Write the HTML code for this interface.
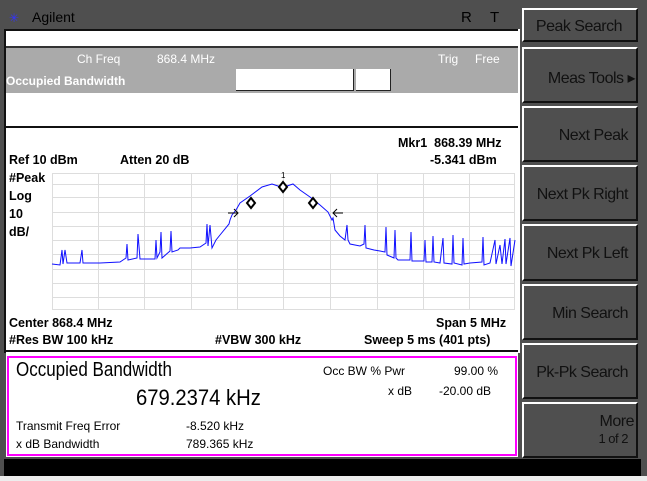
<!DOCTYPE html><html><head><style>
body{margin:0;width:647px;height:481px;background:#ededed;position:relative;overflow:hidden;font-family:"Liberation Sans",sans-serif}
.a{position:absolute}
.k{position:absolute;left:522px;width:116px;background:#4f4f4f;border-top:2px solid #fff;border-left:2px solid #fff;border-right:2px solid #111;border-bottom:2px solid #111;color:#111;font-size:16px;letter-spacing:-0.5px;text-align:right;box-sizing:border-box;padding-right:8px}
.b{font-weight:bold;font-size:12.5px;color:#000;position:absolute;white-space:nowrap}
.g{color:#fff;font-size:12px;position:absolute}
.m{position:absolute;font-size:12px;color:#000;white-space:nowrap}
</style></head><body>
<div class="a" style="left:0;top:0;width:647px;height:476px;background:#4f4f4f"></div>
<div class="a" style="left:9px;top:11px;color:#33f;font-size:12px">✳</div>
<div class="a" style="left:32px;top:9px;font-size:14px;color:#000">Agilent</div>
<div class="a" style="left:461px;top:9px;font-size:15px;color:#000">R</div>
<div class="a" style="left:490px;top:9px;font-size:15px;color:#000">T</div>
<div class="a" style="left:4px;top:29px;width:514px;height:324px;background:#fff;border-left:2px solid #111"></div>
<div class="a" style="left:6px;top:29px;width:512px;height:2px;background:#111"></div>
<div class="a" style="left:6px;top:47px;width:512px;height:46px;background:#aaa"></div>
<div class="a" style="left:6px;top:46px;width:512px;height:2px;background:#333"></div>
<div class="g" style="left:77px;top:52px">Ch Freq</div>
<div class="g" style="left:157px;top:52px">868.4 MHz</div>
<div class="g" style="left:438px;top:52px">Trig</div>
<div class="g" style="left:475px;top:52px">Free</div>
<div class="g" style="left:6px;top:74px;font-weight:bold">Occupied Bandwidth</div>
<div class="a" style="left:236px;top:69px;width:117px;height:21px;background:#fff;border-right:1px solid #222;border-bottom:1px solid #222"></div>
<div class="a" style="left:356px;top:69px;width:34px;height:21px;background:#fff;border-right:1px solid #222;border-bottom:1px solid #222"></div>
<div class="a" style="left:6px;top:126px;width:512px;height:2px;background:#111"></div>
<div class="b" style="left:398px;top:136px">Mkr1&nbsp; 868.39 MHz</div>
<div class="b" style="left:9px;top:153px">Ref 10 dBm</div>
<div class="b" style="left:120px;top:153px">Atten 20 dB</div>
<div class="b" style="left:430px;top:153px">-5.341 dBm</div>
<div class="b" style="left:9px;top:171px">#Peak</div>
<div class="b" style="left:9px;top:189px">Log</div>
<div class="b" style="left:9px;top:207px">10</div>
<div class="b" style="left:9px;top:225px">dB/</div>
<div class="b" style="left:9px;top:316px">Center 868.4 MHz</div>
<div class="b" style="left:436px;top:316px">Span 5 MHz</div>
<div class="b" style="left:9px;top:333px">#Res BW 100 kHz</div>
<div class="b" style="left:215px;top:333px">#VBW 300 kHz</div>
<div class="b" style="left:364px;top:333px">Sweep 5 ms (401 pts)</div>
<div class="a" style="left:6px;top:350px;width:512px;height:2px;background:#111"></div>
<svg class="a" style="left:0;top:0" width="647" height="481">
<g stroke="#ddd" stroke-width="1" fill="none">
<rect x="52.5" y="173.5" width="462" height="136"/>
<path d="M98.5 174V310M144.5 174V310M191.5 174V310M237.5 174V310M283.5 174V310M330.5 174V310M377.5 174V310M423.5 174V310M469.5 174V310M52 184.5H515M52 197.5H515M52 212.5H515M52 226.5H515M52 240.5H515M52 254.5H515M52 269.5H515M52 283.5H515M52 297.5H515"/>
</g>
<polyline fill="none" stroke="#1010ff" stroke-width="1" points="52,264 60,265 62,250 63,264 65,250 67,263 80,263 82,250 83,263 100,263 120,262 126,258 127,244 128,260 137,258 138,234 140,259 155,259 156,240 157,258 160,252 161,232 162,258 170,251 171,231 172,252 178,250 180,248 190,248 200,247 206,243 207,224 208,246 210,225 212,248 216,240 220,235 229,224 230,220 232,215 236,210 240,203 250,196 262,187 272,184 278,186 283,188 287,186 293,184 300,190 310,197 320,205 328,212 332,220 333,218 335,230 340,236 345,240 347,225 348,240 350,244 360,246 364,244 365,225 366,248 374,250 380,251 385,252 386,227 387,255 394,258 395,230 396,258 398,260 410,260 411,232 412,261 424,261 425,240 426,262 432,262 433,236 434,262 440,263 443,238 444,263 452,264 453,235 454,263 462,265 463,238 464,264 470,263 482,262 483,237 484,265 490,263 495,240 496,264 500,245 502,264 505,239 506,264 510,238 511,266 515,240"/>
<g fill="#fff" stroke="#000" stroke-width="2">
<path d="M251 198l4 5-4 5-4-5z"/><path d="M283 182l4 5-4 5-4-5z"/><path d="M313 198l4 5-4 5-4-5z"/>
</g>
<text x="281" y="178" font-size="8" font-family="Liberation Sans">1</text>
<g stroke="#000" stroke-width="1" fill="none"><path d="M228 213h10M234 209l4 4-4 4M333 213h10M337 209l-4 4 4 4"/></g>
</svg>
<div class="a" style="left:6px;top:353px;width:512px;height:104px;background:#fff"></div>
<div class="a" style="left:7px;top:356px;width:506px;height:96px;border:2px solid #f0f"></div>
<div class="m" style="left:16px;top:359px;font-size:20px;transform:scaleX(0.85);transform-origin:left">Occupied Bandwidth</div>
<div class="m" style="left:136px;top:385px;font-size:22px;transform:scaleX(0.92);transform-origin:left">679.2374 kHz</div>
<div class="m" style="left:323px;top:364px">Occ BW % Pwr</div>
<div class="m" style="left:454px;top:364px">99.00 %</div>
<div class="m" style="left:388px;top:384px">x dB</div>
<div class="m" style="left:439px;top:384px">-20.00 dB</div>
<div class="m" style="left:16px;top:419px">Transmit Freq Error</div>
<div class="m" style="left:186px;top:419px">-8.520 kHz</div>
<div class="m" style="left:16px;top:437px">x dB Bandwidth</div>
<div class="m" style="left:186px;top:437px">789.365 kHz</div>
<div class="a" style="left:4px;top:459px;width:637px;height:17px;background:#000"></div>
<div class="k" style="top:8px;height:34px;padding-top:8px;padding-right:14px">Peak Search</div>
<div class="k" style="top:47px;height:56px;padding-top:19px;padding-right:1px">Meas Tools ▸</div>
<div class="k" style="top:106px;height:56px;padding-top:19px">Next Peak</div>
<div class="k" style="top:165px;height:56px;padding-top:19px">Next Pk Right</div>
<div class="k" style="top:224px;height:57px;padding-top:19px">Next Pk Left</div>
<div class="k" style="top:284px;height:56px;padding-top:19px">Min Search</div>
<div class="k" style="top:343px;height:56px;padding-top:19px">Pk-Pk Search</div>
<div class="k" style="top:402px;height:56px;padding-top:9px;line-height:17px;padding-right:2px">More<br><span style="font-size:13px;padding-right:6px">1 of 2</span></div>
</body></html>
